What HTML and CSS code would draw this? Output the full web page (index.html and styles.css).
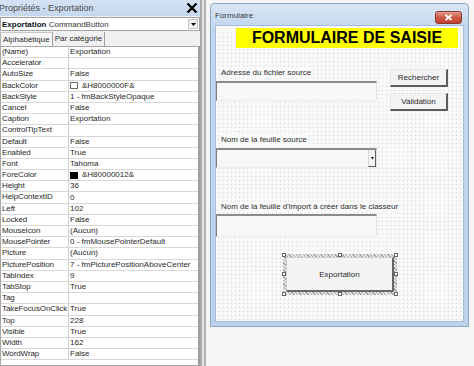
FILE: index.html
```html
<!DOCTYPE html>
<html lang="fr">
<head>
<meta charset="utf-8">
<title>Propriétés - Exportation</title>
<link rel="stylesheet" href="styles.css">
</head>
<body>
<div class="app">
  <aside class="props">
    <div class="props-title">
      <span class="props-title-text">Propriétés - Exportation</span>
      <svg class="props-close" width="12" height="12" viewBox="0 0 12 12"><path d="M1.5 1.5 L10.5 10.5 M10.5 1.5 L1.5 10.5" stroke="#000" stroke-width="2.3" fill="none"/></svg>
    </div>
    <div class="obj-select">
      <span><b>Exportation</b> CommandButton</span>
      <span class="obj-arrow"><svg width="5" height="3" viewBox="0 0 5 3"><path d="M0 0 H5 L2.5 3 Z" fill="#000"/></svg></span>
    </div>
    <div class="tabs">
      <span class="tab tab-active">Alphabétique</span>
      <span class="tab">Par catégorie</span>
    </div>
    <div class="pgrid">
      <span class="k">(Name)</span><span class="v">Exportation</span>
      <span class="k">Accelerator</span><span class="v"></span>
      <span class="k">AutoSize</span><span class="v">False</span>
      <span class="k">BackColor</span><span class="v"><i class="swatch swatch-white"></i>&amp;H8000000F&amp;</span>
      <span class="k">BackStyle</span><span class="v">1 - fmBackStyleOpaque</span>
      <span class="k">Cancel</span><span class="v">False</span>
      <span class="k">Caption</span><span class="v">Exportation</span>
      <span class="k">ControlTipText</span><span class="v"></span>
      <span class="k">Default</span><span class="v">False</span>
      <span class="k">Enabled</span><span class="v">True</span>
      <span class="k">Font</span><span class="v">Tahoma</span>
      <span class="k">ForeColor</span><span class="v"><i class="swatch swatch-black"></i>&amp;H80000012&amp;</span>
      <span class="k">Height</span><span class="v">36</span>
      <span class="k">HelpContextID</span><span class="v">0</span>
      <span class="k">Left</span><span class="v">102</span>
      <span class="k">Locked</span><span class="v">False</span>
      <span class="k">MouseIcon</span><span class="v">(Aucun)</span>
      <span class="k">MousePointer</span><span class="v">0 - fmMousePointerDefault</span>
      <span class="k">Picture</span><span class="v">(Aucun)</span>
      <span class="k">PicturePosition</span><span class="v">7 - fmPicturePositionAboveCenter</span>
      <span class="k">TabIndex</span><span class="v">9</span>
      <span class="k">TabStop</span><span class="v">True</span>
      <span class="k">Tag</span><span class="v"></span>
      <span class="k">TakeFocusOnClick</span><span class="v">True</span>
      <span class="k">Top</span><span class="v">228</span>
      <span class="k">Visible</span><span class="v">True</span>
      <span class="k">Width</span><span class="v">162</span>
      <span class="k">WordWrap</span><span class="v">False</span>
    </div>
  </aside>
  <div class="splitter"></div>
  <main class="designer">
    <div class="userform">
      <div class="uf-title">
        <span class="uf-title-text">Formulaire</span>
        <span class="uf-close"><svg width="9" height="7" viewBox="0 0 9 7"><path d="M1.5 1 L7.5 6 M7.5 1 L1.5 6" stroke="#fff" stroke-width="1.8" fill="none"/></svg></span>
      </div>
      <div class="uf-client">
        <div class="ctl banner">FORMULAIRE DE SAISIE</div>
        <div class="ctl lbl lbl-1">Adresse du fichier source</div>
        <div class="ctl textbox tb-1"></div>
        <div class="ctl btn btn-search">Rechercher</div>
        <div class="ctl btn btn-valid">Validation</div>
        <div class="ctl lbl lbl-2">Nom de la feuille source</div>
        <div class="ctl textbox combo"><span class="combo-arrow"><svg width="3" height="3" viewBox="0 0 3 3"><path d="M0 0 H3 L1.5 2.5 Z" fill="#000"/></svg></span></div>
        <div class="ctl lbl lbl-3">Nom de la feuille d'import à créer dans le classeur</div>
        <div class="ctl textbox tb-3"></div>
        <div class="ctl selection">
          <div class="btn btn-export">Exportation</div>
          <i class="handle h-tl"></i><i class="handle h-tm"></i><i class="handle h-tr"></i>
          <i class="handle h-ml"></i><i class="handle h-mr"></i>
          <i class="handle h-bl"></i><i class="handle h-bm"></i><i class="handle h-br"></i>
        </div>
      </div>
    </div>
  </main>
</div>
</body>
</html>
```
FILE: styles.css
```css
* { box-sizing: border-box; }

body {
  margin: 0;
  width: 474px;
  height: 366px;
  overflow: hidden;
  font-family: "Liberation Sans", Arial, sans-serif;
  font-size: 8px;
  color: #262626;
  background: #f4f4f4;
}

.app {
  display: flex;
  height: 366px;
}

/* ---------- Properties panel ---------- */
.props {
  width: 200px;
  flex: none;
  display: flex;
  flex-direction: column;
  background: #f0f0f0;
}

.props-title {
  height: 16px;
  display: flex;
  align-items: center;
  justify-content: space-between;
  padding-right: 2px;
  background: linear-gradient(#d4e3f4, #c4d7ed);
  font-size: 9px;
  color: #4d4d4d;
}

.props-title-text { margin-left: -1px; }

.props-close { display: block; }

.obj-select {
  margin-top: 1px;
  height: 14px;
  display: flex;
  align-items: center;
  justify-content: space-between;
  padding-left: 1px;
  background: #fff;
  border: 1px solid #a3a3a3;
  color: #333;
}

.obj-select b { color: #111; }

.obj-arrow {
  width: 10px;
  height: 10px;
  margin-right: 1px;
  display: flex;
  align-items: center;
  justify-content: center;
  border: 1px solid #c4c4c4;
  background: #f4f4f4;
}

.obj-arrow svg { display: block; }

.tabs {
  height: 15px;
  display: flex;
  align-items: flex-end;
  padding-top: 1px;
}

.tab {
  height: 14px;
  line-height: 13px;
  padding: 0 2px;
  border-right: 1px solid #9e9e9e;
  color: #2c2c2c;
  background: #f0f0f0;
}

.tab-active {
  border-left: 1px solid #b5b5b5;
  border-top: 1px solid #c9c9c9;
  background: #f7f7f7;
}

.pgrid {
  display: grid;
  grid-template-columns: 68px 1fr;
  grid-auto-rows: 11.2px;
  border: 1px solid #a8a8a8;
  border-right: 2px solid #9d9d9d;
  background: #fff;
  flex: 1;
  align-content: start;
}

.pgrid span {
  border-bottom: 1px solid #d8d8d8;
  line-height: 10px;
  white-space: nowrap;
  color: #2a2a2a;
}

.pgrid .k {
  padding-left: 1px;
  border-right: 1px solid #d0d0d0;
  letter-spacing: -0.1px;
}

.pgrid .v {
  padding-left: 1px;
  display: flex;
  align-items: center;
  overflow: hidden;
}

.swatch {
  width: 8px;
  height: 7px;
  margin-right: 4px;
  border: 1px solid #6e6e6e;
}

.swatch-white { background: #fff; }
.swatch-black { background: #000; border-color: #000; }

/* ---------- Splitter ---------- */
.splitter {
  width: 6px;
  flex: none;
  border-left: 2px solid #a9a9a9;
  border-right: 2px solid #b3b3b3;
  background: #e6e6e6;
}

/* ---------- Designer ---------- */
.designer {
  flex: 1;
  padding: 3px 0 0 4px;
  background: #f5f5f5;
}

.userform {
  width: 259px;
  height: 324px;
  display: flex;
  flex-direction: column;
  padding: 0 4px 4px;
  border: 1px solid #8ea6c2;
  border-radius: 4px 4px 0 0;
  background: linear-gradient(#d8e6f5, #c3d7ee 24px, #bed3eb);
}

.uf-title {
  height: 21px;
  flex: none;
  display: flex;
  align-items: center;
  justify-content: space-between;
  color: #3a3a3a;
}

.uf-title-text { margin-left: 0; margin-top: 1px; }

.uf-close {
  width: 27px;
  height: 13px;
  margin-top: 5px;
  margin-right: 2px;
  display: flex;
  align-items: center;
  justify-content: center;
  border: 1px solid #8d3a32;
  border-radius: 3px;
  background: linear-gradient(#e39b8c, #cf5a47 50%, #c2402d);
}

.uf-close svg { display: block; }

.uf-client {
  flex: 1;
  position: relative;
  border: 1px solid #a7bcd6;
  background-color: #f9f9f9;
  background-image: radial-gradient(circle, #c6c6c6 0.5px, transparent 0.85px);
  background-size: 4.1px 4.1px;
  background-position: 1px 1px;
}

.ctl { position: absolute; }

.banner {
  left: 20px;
  top: 2px;
  width: 222px;
  height: 20px;
  background: #ffff00;
  color: #000;
  font-weight: bold;
  font-size: 16px;
  line-height: 20px;
  text-align: center;
}

.lbl {
  left: 5px;
  height: 10px;
  line-height: 10px;
  color: #2b2b2b;
  white-space: nowrap;
  background: #f9f9f9;
  padding-right: 2px;
}

.lbl-1 { top: 42px; }
.lbl-2 { top: 109px; }
.lbl-3 { top: 176px; }

.textbox {
  left: 0;
  width: 161px;
  background: #f7f7f7;
  border-top: 2px solid #8c8c8c;
  border-left: 1px solid #7e7e7e;
  border-right: 1px solid #e3e3e3;
  border-bottom: 1px solid #ececec;
}

.tb-1 { top: 55px; height: 20px; }
.combo { top: 122px; height: 20px; }
.tb-3 { top: 188px; height: 23px; }

.combo-arrow {
  position: absolute;
  right: 0;
  top: 0;
  bottom: 0;
  width: 8px;
  display: flex;
  align-items: center;
  justify-content: center;
  background: #f3f3f3;
  border-left: 1px solid #d6d6d6;
  border-right: 1px solid #606060;
  border-bottom: 1px solid #606060;
}

.combo-arrow svg { display: block; }

.btn {
  display: flex;
  align-items: center;
  justify-content: center;
  background: #f3f3f3;
  border-top: 1px solid #e6e6e6;
  border-left: 1px solid #e6e6e6;
  border-right: 2px solid #5c5c5c;
  border-bottom: 2px solid #5c5c5c;
  color: #2a2a2a;
}

.btn-search { left: 174px; top: 43px; width: 58px; height: 18px; }
.btn-valid { left: 174px; top: 67px; width: 58px; height: 18px; }

.selection {
  left: 67px;
  top: 228px;
  width: 114px;
  height: 41px;
  padding: 3px;
  background: repeating-linear-gradient(45deg, #a3a3a3 0 1px, #e8e8e8 1px 2.5px);
}

.btn-export {
  width: 100%;
  height: 100%;
  background: #f4f4f4;
  border-top: 1px solid #cfcfcf;
  border-left: 1px solid #cfcfcf;
  border-right: 2px solid #666;
  border-bottom: 2px solid #666;
}

.handle {
  position: absolute;
  width: 4px;
  height: 4px;
  background: #fff;
  border: 1px solid #666;
}

.h-tl { left: -1px; top: -1px; }
.h-tm { left: 55px; top: -1px; }
.h-tr { right: -1px; top: -1px; }
.h-ml { left: -1px; top: 18px; }
.h-mr { right: -1px; top: 18px; }
.h-bl { left: -1px; bottom: -1px; }
.h-bm { left: 55px; bottom: -1px; }
.h-br { right: -1px; bottom: -1px; }
```
